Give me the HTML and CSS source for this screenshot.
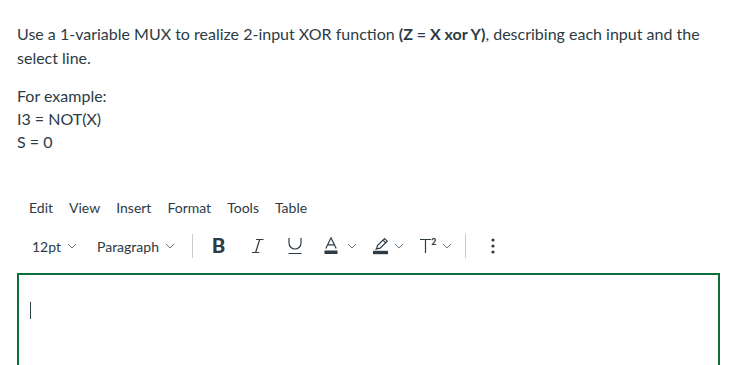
FILE: index.html
```html
<!DOCTYPE html>
<html>
<head>
<meta charset="utf-8">
<link rel="stylesheet" href="styles.css">
</head>
<body>
<div class="page">
  <p class="q1">Use a 1-variable MUX to realize 2-input XOR function <strong>(Z = X xor Y)</strong>, describing each input and the select line.</p>
  <p class="q2">For example:<br>I3 = NOT(X)<br>S = 0</p>

  <div class="editor">
    <div class="menubar">
      <span class="menu-item">Edit</span>
      <span class="menu-item">View</span>
      <span class="menu-item">Insert</span>
      <span class="menu-item">Format</span>
      <span class="menu-item">Tools</span>
      <span class="menu-item">Table</span>
    </div>

    <div class="toolbar">
      <div class="select sel-size"><span>12pt</span><svg class="chev" width="10" height="6" viewBox="0 0 10 6"><polyline points="1,1 5,5 9,1"/></svg></div>
      <div class="select sel-block"><span>Paragraph</span><svg class="chev" width="10" height="6" viewBox="0 0 10 6"><polyline points="1,1 5,5 9,1"/></svg></div>
      <div class="sep sep-1"></div>
      <span class="ico-b">B</span>
      <svg class="ico ico-i" width="14" height="24" viewBox="0 0 14 24">
        <path d="M5 5.5H12.5M8.7 5.5L4.6 18.5M1 18.5H8.3"/>
      </svg>
      <svg class="ico ico-u" width="16" height="24" viewBox="0 0 16 24">
        <path d="M2 4V9A6 6 0 0 0 14 9V4M1.5 19.5H14.5"/>
      </svg>
      <svg class="ico ico-a" width="14" height="24" viewBox="0 0 14 24">
        <path d="M1.8 14.5L7 3.8L12.2 14.5M3.8 10.8H10.2"/>
        <rect class="fillbar" x="0.5" y="16.5" width="13" height="3.5"/>
      </svg>
      <svg class="chev chev-a" width="10" height="6" viewBox="0 0 10 6"><polyline points="1,1 5,5 9,1"/></svg>
      <svg class="ico ico-h" width="17" height="24" viewBox="0 0 17 24">
        <path d="M12.6 4.6L15.2 7.2L8.2 14.2L4.6 14.9L5.4 11.6Z M11 6.2L13.6 8.8 M4.6 14.9L3.4 15.6"/>
        <rect class="fillbar" x="1" y="16.8" width="15" height="3.4"/>
      </svg>
      <svg class="chev chev-h" width="10" height="6" viewBox="0 0 10 6"><polyline points="1,1 5,5 9,1"/></svg>
      <svg class="ico ico-t" width="20" height="24" viewBox="0 0 20 24">
        <path d="M1 5.5H12M6.5 5.5V19"/>
        <text x="12.2" y="11" class="sup">2</text>
      </svg>
      <svg class="chev chev-t" width="10" height="6" viewBox="0 0 10 6"><polyline points="1,1 5,5 9,1"/></svg>
      <div class="sep sep-2"></div>
      <svg class="dots" width="6" height="24" viewBox="0 0 6 24">
        <circle cx="3" cy="6" r="1.6"/>
        <circle cx="3" cy="12" r="1.6"/>
        <circle cx="3" cy="18" r="1.6"/>
      </svg>
    </div>

    <div class="area"><span class="caret"></span></div>
  </div>
</div>
</body>
</html>
```

FILE: styles.css
```css
html, body {
  margin: 0;
  padding: 0;
  background: #ffffff;
}

body {
  font-family: Lato, "Noto Sans", sans-serif;
  color: #2d3b45;
}

.page {
  padding-left: 17px;
}

.q1 {
  margin: 22px 0 0 0;
  font-size: 16px;
  line-height: 24px;
  width: 700px;
}

.q1 strong {
  font-weight: 700;
}

.q2 {
  margin: 14px 0 0 0;
  font-size: 16px;
  line-height: 23px;
}

.editor {
  width: 703px;
  margin-top: 37px;
}

.menubar {
  display: flex;
  align-items: center;
  height: 34px;
  padding-left: 4px;
  font-size: 14px;
}

.menu-item {
  padding: 0 8px;
}

.toolbar {
  display: flex;
  align-items: center;
  height: 34px;
  margin-top: 5px;
  font-size: 14px;
}

.select {
  display: flex;
  align-items: center;
  justify-content: space-between;
}

.sel-size {
  margin-left: 15px;
  width: 45px;
}

.sel-block {
  margin-left: 20px;
  width: 78px;
}

.chev {
  display: block;
  flex: none;
}

.chev polyline {
  fill: none;
  stroke: #6b7680;
  stroke-width: 1;
}

.sep {
  width: 1px;
  height: 24px;
  background: #c7cdd1;
  flex: none;
}

.sep-1 {
  margin-left: 17px;
}

.ico-b {
  margin-left: 19px;
  font-family: Roboto, "Liberation Sans", sans-serif;
  font-weight: 700;
  font-size: 21px;
  line-height: 24px;
  color: #2d3b45;
}

.ico {
  display: block;
  flex: none;
}

.ico path {
  fill: none;
  stroke: #2d3b45;
  stroke-width: 1.2;
}

.ico .fillbar {
  fill: #2d3b45;
}

.ico .sup {
  font-family: Roboto, "Liberation Sans", sans-serif;
  font-size: 9px;
  font-weight: 700;
  fill: #2d3b45;
}

.ico-i {
  margin-left: 26px;
}

.ico-u {
  margin-left: 22px;
}

.ico-a {
  margin-left: 21px;
}

.chev-a {
  margin-left: 9px;
}

.ico-h {
  margin-left: 15px;
}

.chev-h {
  margin-left: 5px;
}

.ico-t {
  margin-left: 15px;
}

.chev-t {
  margin-left: 3px;
}

.sep-2 {
  margin-left: 13px;
}

.dots {
  display: block;
  margin-left: 24px;
}

.dots circle {
  fill: #2d3b45;
}

.area {
  margin-top: 10px;
  height: 130px;
  border: 2px solid #0b6e3b;
  box-sizing: border-box;
  position: relative;
}

.caret {
  position: absolute;
  left: 11px;
  top: 27px;
  width: 1px;
  height: 17px;
  background: #2d3b45;
}
```
